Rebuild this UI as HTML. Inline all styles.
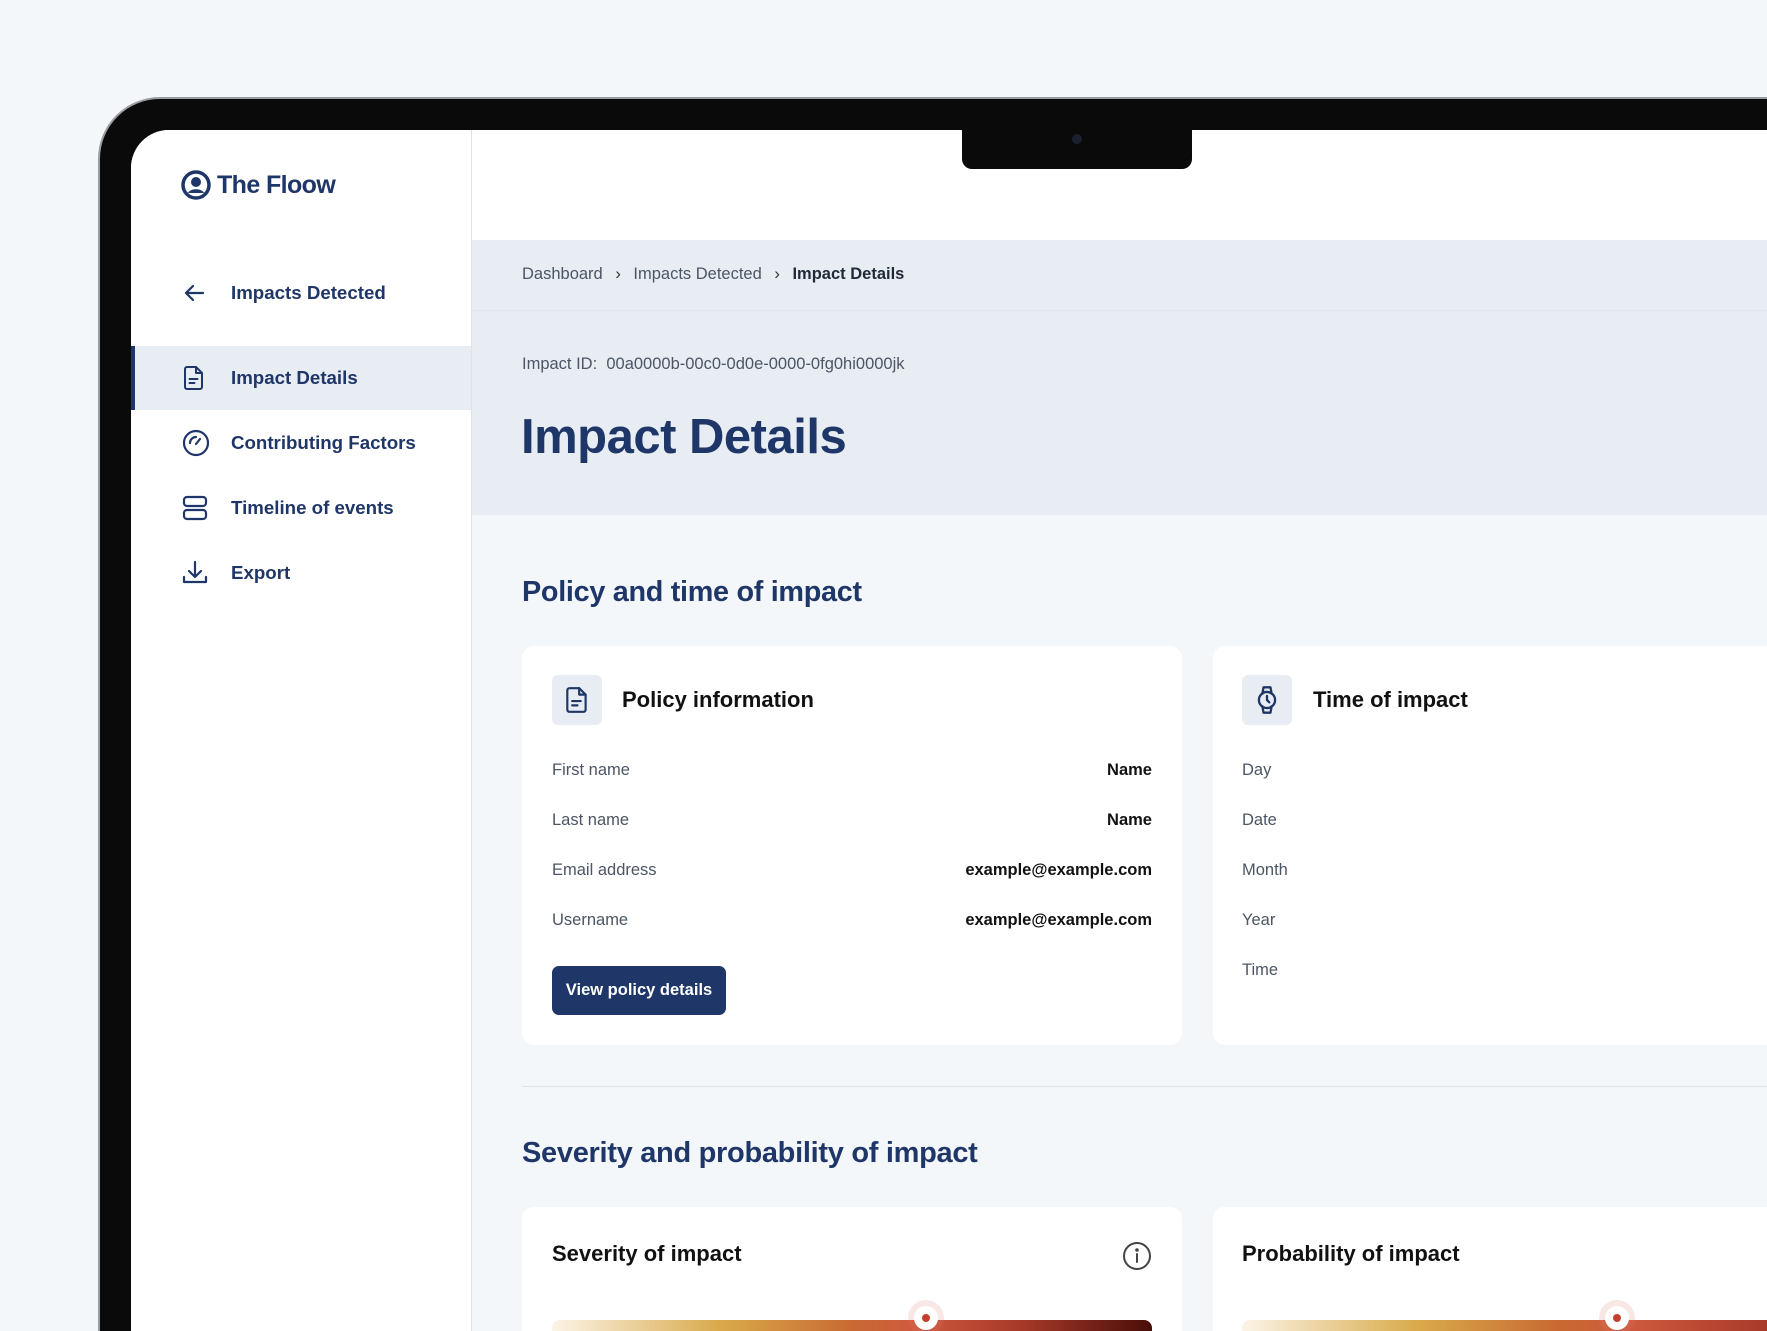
<!DOCTYPE html>
<html style="width:1767px;height:1331px;overflow:hidden"><head><meta charset="utf-8"><style>
*{margin:0;padding:0;box-sizing:border-box}
body{width:1767px;height:1331px;overflow:hidden;background:#f4f7fa;font-family:"Liberation Sans",sans-serif;position:relative}
.abs{position:absolute}
.bezel{left:98px;top:97px;width:1669px;height:1234px;background:#0a0a0a;border-radius:62px 0 0 0;border:2px solid #9a9ca0;border-right:none;border-bottom:none}
.screen{left:131px;top:130px;width:1636px;height:1201px;background:#f4f7fa;border-radius:38px 0 0 0;overflow:hidden}
.side{left:0;top:0;width:341px;height:1201px;background:#fff;border-right:1px solid #dde2e9}
.navy{color:#1f3668}
.nav{position:absolute;left:0;width:340px;height:64px;display:flex;align-items:center;font-size:18.7px;font-weight:bold;color:#1f3668}
.nav svg{position:absolute;left:51px}
.nav span{position:absolute;left:100px}
.lbl{position:absolute;font-size:16.5px;color:#4b5563}
.val{position:absolute;font-size:16.5px;font-weight:bold;color:#111;text-align:right}
.card{position:absolute;background:#fff;border-radius:12px}
.ibox{position:absolute;width:50px;height:50px;background:#e8edf4;border-radius:6px;display:flex;align-items:center;justify-content:center}
</style></head><body>
<div class="abs bezel"></div>
<div class="abs screen">
  <div class="abs" style="left:340px;top:0;width:1400px;height:110px;background:#fff"></div>
  <div class="abs" style="left:340px;top:110px;width:1400px;height:275px;background:#e8edf4"></div>
  <div class="abs" style="left:340px;top:180px;width:1400px;height:1px;background:#dfe5ee"></div>
  <div class="abs" style="left:391px;top:135px;font-size:16.5px;color:#4b5563;white-space:nowrap">Dashboard <span style="margin:0 8px;color:#333">›</span> Impacts Detected <span style="margin:0 8px;color:#333">›</span> <b style="color:#1f2937">Impact Details</b></div>
  <div class="abs" style="left:391px;top:225px;font-size:16.5px;color:#4b5563;white-space:nowrap">Impact ID:&nbsp; 00a0000b-00c0-0d0e-0000-0fg0hi0000jk</div>
  <div class="abs navy" style="left:390px;top:279px;font-size:49px;font-weight:bold;letter-spacing:-0.5px">Impact Details</div>
  <div class="abs navy" style="left:391px;top:446px;font-size:28.8px;font-weight:bold;letter-spacing:-0.3px">Policy and time of impact</div>

  <div class="card" style="left:391px;top:516px;width:660px;height:399px"></div>
  <div class="ibox" style="left:421px;top:545px"><svg width="26" height="28" viewBox="0 0 24 26" fill="none" stroke="#1f3668" stroke-width="2" stroke-linejoin="round" stroke-linecap="round"><path d="M5 2h9l6 6v14a2 2 0 0 1-2 2H5a2 2 0 0 1-2-2V4a2 2 0 0 1 2-2z"/><path d="M14 2v6h6"/><path d="M7.5 14h8M7.5 18h5"/></svg></div>
  <div class="abs" style="left:491px;top:557px;font-size:22px;font-weight:bold;color:#111">Policy information</div>
  <div class="lbl" style="left:421px;top:631px">First name</div><div class="val" style="right:615px;top:631px">Name</div>
  <div class="lbl" style="left:421px;top:681px">Last name</div><div class="val" style="right:615px;top:681px">Name</div>
  <div class="lbl" style="left:421px;top:731px">Email address</div><div class="val" style="right:615px;top:731px">example@example.com</div>
  <div class="lbl" style="left:421px;top:781px">Username</div><div class="val" style="right:615px;top:781px">example@example.com</div>
  <div class="abs" style="left:421px;top:836px;width:174px;height:49px;background:#1f3668;border-radius:7px;color:#fff;font-size:16.5px;font-weight:bold;display:flex;align-items:center;justify-content:center">View policy details</div>

  <div class="card" style="left:1082px;top:516px;width:700px;height:399px"></div>
  <div class="ibox" style="left:1111px;top:545px"><svg width="24" height="30" viewBox="0 0 20 26" fill="none" stroke="#1f3668" stroke-width="2" stroke-linecap="round" stroke-linejoin="round"><circle cx="10" cy="13" r="7"/><path d="M10 9.5V13l2 2"/><path d="M6 7.5L7 2h6l1 5.5M6 18.5L7 24h6l1-5.5"/></svg></div>
  <div class="abs" style="left:1182px;top:557px;font-size:22px;font-weight:bold;color:#111">Time of impact</div>
  <div class="lbl" style="left:1111px;top:631px">Day</div>
  <div class="lbl" style="left:1111px;top:681px">Date</div>
  <div class="lbl" style="left:1111px;top:731px">Month</div>
  <div class="lbl" style="left:1111px;top:781px">Year</div>
  <div class="lbl" style="left:1111px;top:831px">Time</div>

  <div class="abs" style="left:391px;top:956px;width:1400px;height:1px;background:#e0e5ec"></div>
  <div class="abs navy" style="left:391px;top:1007px;font-size:29px;font-weight:bold;letter-spacing:-0.3px">Severity and probability of impact</div>

  <div class="card" style="left:391px;top:1077px;width:660px;height:200px"></div>
  <div class="abs" style="left:421px;top:1111px;font-size:22px;font-weight:bold;color:#111">Severity of impact</div>
  <svg class="abs" style="left:991px;top:1111px" width="30" height="30" viewBox="0 0 30 30" fill="none" stroke="#444" stroke-width="2"><circle cx="15" cy="15" r="13"/><path d="M15 13v8" stroke-linecap="round"/><circle cx="15" cy="9" r="0.8" fill="#444"/></svg>
  <div class="abs" style="left:421px;top:1190px;width:600px;height:20px;border-radius:8px;background:linear-gradient(90deg,#fbf4e6 0%,#d9aa4a 28%,#c86a32 50%,#cf5a3e 60%,#a83a2a 78%,#4a0e08 100%)"></div>
  <div class="abs" style="left:777px;top:1170px;width:36px;height:36px;border-radius:50%;background:rgba(220,120,110,0.18)"></div>
  <div class="abs" style="left:783px;top:1176px;width:24px;height:24px;border-radius:50%;background:#fff"></div>
  <div class="abs" style="left:791px;top:1184px;width:8px;height:8px;border-radius:50%;background:#c2412d"></div>

  <div class="card" style="left:1082px;top:1077px;width:700px;height:200px"></div>
  <div class="abs" style="left:1111px;top:1111px;font-size:22px;font-weight:bold;color:#111">Probability of impact</div>
  <div class="abs" style="left:1111px;top:1190px;width:700px;height:20px;border-radius:8px;background:linear-gradient(90deg,#fbf4e6 0%,#d9aa4a 25%,#c86a32 45%,#cf5a3e 55%,#a83a2a 75%,#4a0e08 100%)"></div>
  <div class="abs" style="left:1468px;top:1170px;width:36px;height:36px;border-radius:50%;background:rgba(220,120,110,0.18)"></div>
  <div class="abs" style="left:1474px;top:1176px;width:24px;height:24px;border-radius:50%;background:#fff"></div>
  <div class="abs" style="left:1482px;top:1184px;width:8px;height:8px;border-radius:50%;background:#c2412d"></div>

  <div class="abs side">
    <div class="abs" style="left:50px;top:40px;display:flex;align-items:center">
      <svg width="30" height="30" viewBox="0 0 30 30"><circle cx="15" cy="15" r="13" fill="none" stroke="#1f3668" stroke-width="3.5"/><circle cx="15" cy="12" r="5" fill="#1f3668"/><path d="M7 23c2-5 14-5 16 0" fill="#1f3668"/></svg>
      <span class="navy" style="font-size:25px;font-weight:bold;margin-left:6px;letter-spacing:-0.6px">The Floow</span>
    </div>
    <div class="nav" style="top:131px"><svg width="24" height="24" viewBox="0 0 24 24" fill="none" stroke="#1f3668" stroke-width="2.2" stroke-linecap="round" stroke-linejoin="round"><path d="M21 12H4M11 5l-7 7 7 7"/></svg><span>Impacts Detected</span></div>
    <div class="nav" style="top:216px;background:#e8edf4;border-left:4px solid #1f3668"><svg width="24" height="26" viewBox="0 0 24 26" fill="none" stroke="#1f3668" stroke-width="2" stroke-linejoin="round" stroke-linecap="round" style="left:47px"><path d="M5 2h9l6 6v14a2 2 0 0 1-2 2H5a2 2 0 0 1-2-2V4a2 2 0 0 1 2-2z"/><path d="M14 2v6h6"/><path d="M7.5 14h8M7.5 18h5"/></svg><span style="left:96px">Impact Details</span></div>
    <div class="nav" style="top:281px"><svg width="28" height="28" viewBox="0 0 28 28" fill="none" stroke="#1f3668" stroke-width="2.2" stroke-linecap="round"><circle cx="14" cy="14" r="12"/><path d="M8 14a6 6 0 0 1 6-6"/><path d="M14 15l4-5"/></svg><span>Contributing Factors</span></div>
    <div class="nav" style="top:346px"><svg width="26" height="26" viewBox="0 0 26 26" fill="none" stroke="#1f3668" stroke-width="2.2"><rect x="2" y="2" width="22" height="9" rx="3"/><rect x="2" y="15" width="22" height="9" rx="3"/></svg><span>Timeline of events</span></div>
    <div class="nav" style="top:411px"><svg width="26" height="26" viewBox="0 0 26 26" fill="none" stroke="#1f3668" stroke-width="2.2" stroke-linecap="round" stroke-linejoin="round"><path d="M13 2v14M7 11l6 6 6-6"/><path d="M2 17v5h22v-5"/></svg><span>Export</span></div>
  </div>
  <div class="abs" style="left:831px;top:-5px;width:230px;height:44px;background:#0a0a0a;border-radius:0 0 10px 10px"></div>
  <div class="abs" style="left:941px;top:4px;width:10px;height:10px;border-radius:50%;background:#1a2030"></div>
</div>
</body></html>
